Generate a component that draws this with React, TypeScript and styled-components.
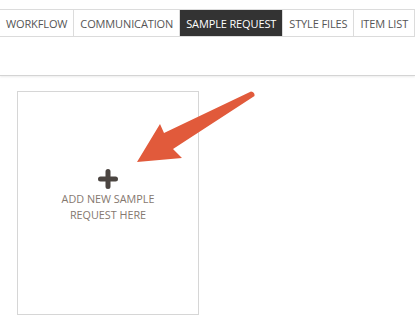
import styled, { createGlobalStyle } from "styled-components";

const GlobalStyle = createGlobalStyle`
  html, body {
    margin: 0;
    padding: 0;
    background: #fff;
    font-family: "Open Sans", "Liberation Sans", sans-serif;
  }
`;

const Page = styled.div`
  position: relative;
  width: 415px;
  height: 335px;
  overflow: hidden;
  padding-top: 9px;
  box-sizing: border-box;
`;

const TabBar = styled.nav`
  display: flex;
  height: 28px;
  border-top: 1px solid #dcdcdc;
  border-bottom: 1px solid #dcdcdc;
  box-sizing: border-box;
`;

const Tab = styled.a<{ $active?: boolean }>`
  display: flex;
  align-items: center;
  padding: 0 6px;
  font-size: 11px;
  letter-spacing: -0.13px;
  color: ${(p) => (p.$active ? "#fff" : "#555")};
  background: ${(p) => (p.$active ? "#333" : "transparent")};
  border-right: 1px solid #dcdcdc;
  text-decoration: none;
  white-space: nowrap;
`;

const SubBar = styled.div`
  height: 38px;
  border-bottom: 1px solid #d4d4d4;
  box-shadow: 0 1px 2px rgba(0, 0, 0, 0.08);
`;

const Content = styled.main`
  padding: 15px 17px;
`;

const AddCard = styled.button`
  width: 182px;
  height: 224px;
  display: flex;
  flex-direction: column;
  align-items: center;
  padding: 77px 0 0;
  box-sizing: border-box;
  background: #fff;
  border: 1px solid #d6d6d6;
  cursor: pointer;
  font-family: inherit;
`;

const PlusIcon = styled.svg`
  width: 20px;
  height: 20px;
  margin-bottom: 2px;
`;

const AddLabel = styled.span`
  font-size: 10.8px;
  line-height: 16px;
  color: #85786f;
  text-transform: uppercase;
  text-align: center;
  width: 130px;
`;

const Arrow = styled.svg`
  position: absolute;
  left: 0;
  top: 0;
  pointer-events: none;
`;

const tabs = ["Workflow", "Communication", "Sample Request", "Style Files", "Item List"];

const App = () => {
  return (
    <Page>
      <GlobalStyle />
      <TabBar>
        {tabs.map((t) => (
          <Tab key={t} href="#" $active={t === "Sample Request"}>
            {t.toUpperCase()}
          </Tab>
        ))}
      </TabBar>
      <SubBar />
      <Content>
        <AddCard>
          <PlusIcon viewBox="0 0 20 20">
            <path
              d="M10 2.5v15M2.5 10h15"
              stroke="#4b4541"
              strokeWidth="5"
              strokeLinecap="round"
            />
          </PlusIcon>
          <AddLabel>
            Add new sample
            <br />
            request here
          </AddLabel>
        </AddCard>
      </Content>
      <Arrow width="415" height="335" viewBox="0 0 415 335">
        <path
          d="M251 91.5 Q255 92 254.5 96 L173 149 L182 158 L137 162 L160 124 L164 133 Z"
          fill="#e15a3b"
        />
      </Arrow>
    </Page>
  );
};

export default App;
